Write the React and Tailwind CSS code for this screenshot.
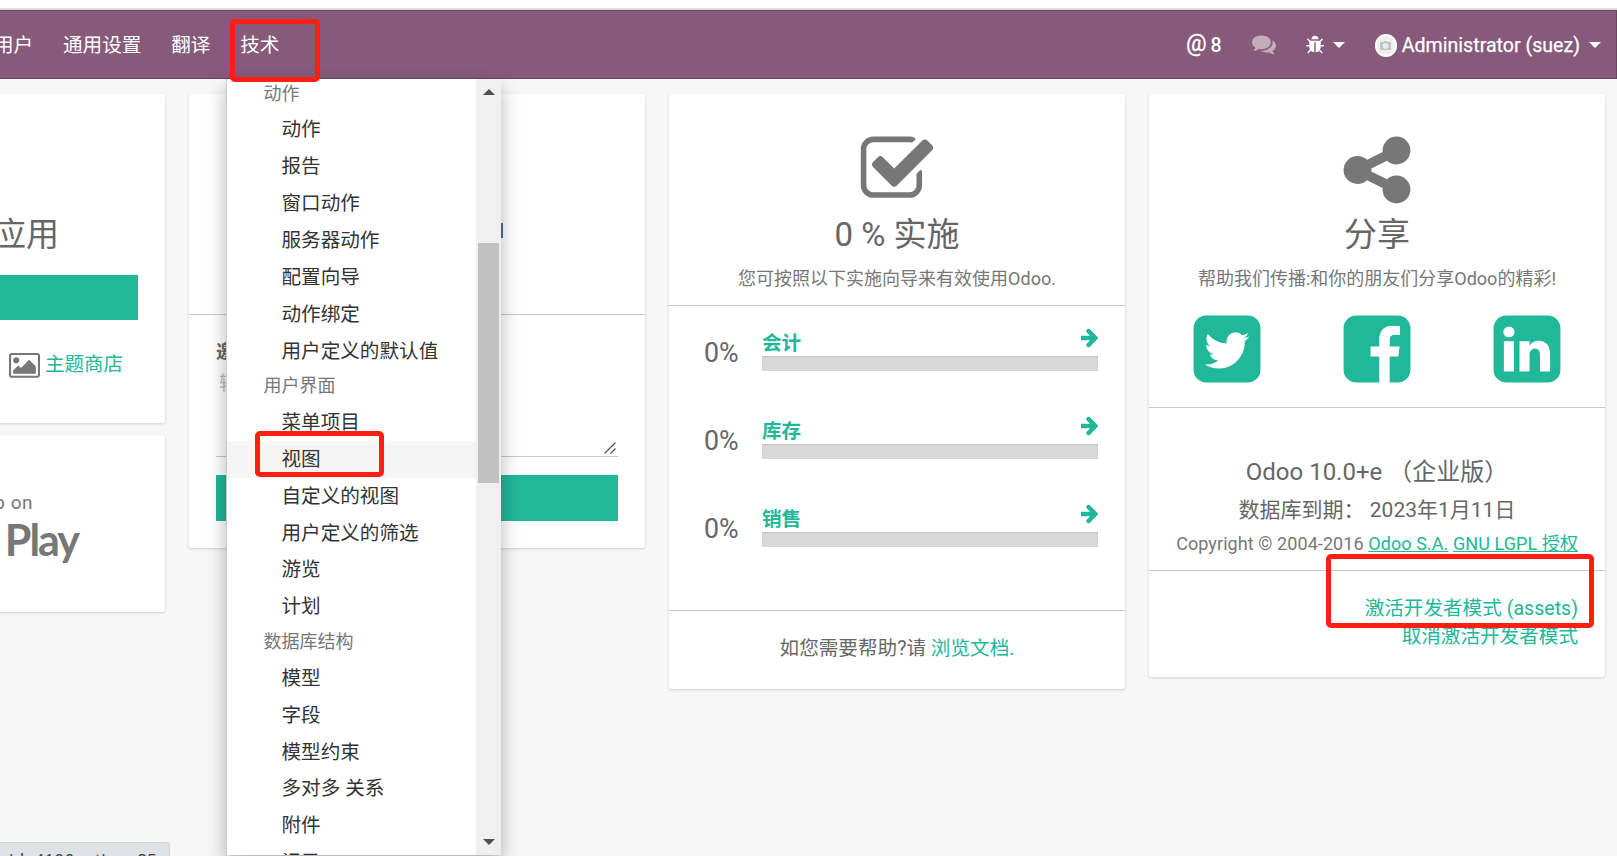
import clsx from 'clsx'

const MENU = [
  { header: true, label: '动作' },
  { label: '动作' },
  { label: '报告' },
  { label: '窗口动作' },
  { label: '服务器动作' },
  { label: '配置向导' },
  { label: '动作绑定' },
  { label: '用户定义的默认值' },
  { header: true, label: '用户界面' },
  { label: '菜单项目' },
  { label: '视图', active: true },
  { label: '自定义的视图' },
  { label: '用户定义的筛选' },
  { label: '游览' },
  { label: '计划' },
  { header: true, label: '数据库结构' },
  { label: '模型' },
  { label: '字段' },
  { label: '模型约束' },
  { label: '多对多 关系' },
  { label: '附件' },
  { label: '记录' },
]

const PLANNERS = ['会计', '库存', '销售']

const ICONS = {
  check: 'M1472 930v318q0 119-84.5 203.5t-203.5 84.5h-832q-119 0-203.5-84.5t-84.5-203.5v-832q0-119 84.5-203.5t203.5-84.5h832q63 0 117 25 15 7 18 23 3 17-9 29l-49 49q-10 10-23 10-3 0-9-2-23-6-45-6h-832q-66 0-113 47t-47 113v832q0 66 47 113t113 47h832q66 0 113-47t47-113v-254q0-13 9-22l64-64q10-10 23-10 6 0 12 3 20 8 20 29zm231-489l-814 814q-24 24-57 24t-57-24l-430-430q-24-24-24-57t24-57l110-110q24-24 57-24t57 24l263 263 647-647q24-24 57-24t57 24l110 110q24 24 24 57t-24 57z',
  share: 'M1344 1024q133 0 226.5 93.5t93.5 226.5-93.5 226.5-226.5 93.5-226.5-93.5-93.5-226.5q0-12 2-34l-360-180q-92 86-218 86-133 0-226.5-93.5t-93.5-226.5 93.5-226.5 226.5-93.5q126 0 218 86l360-180q-2-22-2-34 0-133 93.5-226.5t226.5-93.5 226.5 93.5 93.5 226.5-93.5 226.5-226.5 93.5q-126 0-218-86l-360 180q2 22 2 34t-2 34l360 180q92-86 218-86z',
  arrow: 'M1472 960q0 54-37 91l-651 651q-39 37-91 37-51 0-90-37l-75-75q-38-38-38-91t38-91l293-293h-704q-52 0-84.5-37.5t-32.5-90.5v-128q0-53 32.5-90.5t84.5-37.5h704l-293-294q-38-36-38-90t38-90l75-75q38-38 90-38 53 0 91 38l651 651q37 35 37 90z',
  twitter: 'M1408 610q-56 25-121 34 68-40 93-117-65 38-134 51-61-66-153-66-87 0-148.5 61.5t-61.5 148.5q0 29 5 48-129-7-242-65t-192-155q-29 50-29 106 0 114 91 175-47-1-100-26v2q0 75 50 133.500t123 72.500q-29 8-51 8-13 0-39-4 21 63 74.500 104t121.500 42q-116 90-261 90-26 0-50-3 148 94 322 94 112 0 210-35.500t168-95 120.500-137 75-162 24.500-168.500q0-18-1-27 63-45 105-109zm256-194v960q0 119-84.500 203.500t-203.500 84.500h-960q-119 0-203.500-84.500t-84.500-203.500v-960q0-119 84.500-203.500t203.500-84.500h960q119 0 203.500 84.500t84.500 203.500z',
  facebook: 'M1376 128q119 0 203.500 84.500t84.500 203.500v960q0 119-84.500 203.500t-203.500 84.500h-188v-595h199l30-232h-229v-148q0-56 23.500-84t91.500-28l122-1v-207q-63-9-178-9-136 0-217.500 80t-81.500 226v171h-200v232h200v595h-532q-119 0-203.500-84.500t-84.500-203.500v-960q0-119 84.500-203.500t203.500-84.500h960z',
  linkedin: 'M365 1414h231v-694h-231v694zm246-908q-1-52-36-86t-93-34-94.500 34-36.500 86q0 51 35.500 85.500t92.500 34.500h1q59 0 95-34.500t36-85.500zm585 908h231v-398q0-154-73-233t-193-79q-136 0-209 117h2v-101h-231q3 66 0 694h231v-388q0-38 7-56 15-35 45-59.500t74-24.500q116 0 116 157v371zm468-998v960q0 119-84.500 203.500t-203.500 84.500h-960q-119 0-203.500-84.500t-84.500-203.500v-960q0-119 84.500-203.500t203.500-84.500h960q119 0 203.500 84.500t84.500 203.500z',
  picture: 'M576 576q0 80-56 136t-136 56-136-56-56-136 56-136 136-56 136 56 56 136zm1024 384v448h-1408v-192l320-320 160 160 512-512zm96-704h-1600q-13 0-22.500 9.500t-9.500 22.500v1216q0 13 9.500 22.500t22.500 9.500h1600q13 0 22.500-9.500t9.500-22.500v-1216q0-13-9.500-22.500t-22.500-9.500zm160 32v1216q0 66-47 113t-113 47h-1600q-66 0-113-47t-47-113v-1216q0-66 47-113t113-47h1600q66 0 113 47t47 113z',
  comments: 'M1408 768q0 139-94 257t-256.500 186.500-353.500 68.500q-86 0-176-16-124 88-278 128-36 9-86 16h-3q-11 0-20.500-8t-11.500-21q-1-3-1-6.500t.5-6.500 2-6l2.500-5 3.500-5.500 4-5 4.500-5 4-4.500q5-6 23-25t26-29.500 22.500-29 25-38.500 20.500-44q-124-72-195-177t-71-224q0-139 94-257t256.500-186.500 353.500-68.500 353.500 68.500 256.500 186.500 94 257zm384 256q0 120-71 224.500t-195 176.500q10 24 20.500 44t25 38.500 22.500 29 26 29.500 23 25q1 1 4 4.500t4.500 5 4 5 3.500 5.500l2.500 5 2 6 .5 6.500-1 6.500q-3 14-13 22t-22 7q-50-7-86-16-154-40-278-128-90 16-176 16-271 0-472-132 58 4 88 4 161 0 309-45t264-129q125-92 192-212t67-254q0-77-23-152 129 71 204 178t75 230z',
  bug: 'M1696 960q0 26-19 45t-45 19h-224q0 171-67 290l208 209q19 19 19 45t-19 45q-18 19-45 19t-45-19l-198-197q-5 5-15 13t-42 28.500-65 36.500-82 29-97 13v-896h-128v896q-51 0-101.500-13.500t-87-33-66-39-43.500-32.500l-15-14-183 207q-20 21-48 21-24 0-43-16-19-18-20.500-44.500t15.500-46.500l202-227q-58-114-58-274h-224q-26 0-45-19t-19-45 19-45 45-19h224v-294l-173-173q-19-19-19-45t19-45 45-19 45 19l173 173h844l173-173q19-19 45-19t45 19 19 45-19 45l-173 173v294h224q26 0 45 19t19 45zm-480-576h-640q0-133 93.500-226.500t226.500-93.500 226.500 93.500 93.500 226.500z',
}

function Icon({ name, viewBox = '0 0 1792 1792', className }) {
  return (
    <svg viewBox={viewBox} className={clsx('shrink-0 fill-current', className)} aria-hidden="true">
      <path d={ICONS[name]} />
    </svg>
  )
}

function Caret({ className }) {
  return <i className={clsx('border-x-[6px] border-t-[6px] border-x-transparent border-t-current', className)} />
}

function Card({ className, children }) {
  return (
    <section className={clsx('overflow-hidden rounded-[3px] bg-white shadow-[0_1px_3px_rgba(0,0,0,.16)]', className)}>
      {children}
    </section>
  )
}

function Navbar() {
  return (
    <header className="flex h-[69px] shrink-0 items-center border border-l-0 border-[#68465f] bg-[#875a7b] pt-0.5 text-[19.600px] text-white">
      <nav className="-ml-[6px] flex gap-[29.800px] whitespace-nowrap">
        <a>用户</a>
        <a>通用设置</a>
        <a>翻译</a>
        <a>技术</a>
      </nav>
      <div className="ml-auto flex items-center pr-[15px]">
        <span className="-mt-[3px] text-[23px] leading-none [-webkit-text-stroke:.3px_white]">@</span>
        <span className="ml-[4px] font-medium">8</span>
        <Icon name="comments" className="-mt-0.5 ml-[30px] size-6 opacity-50" />
        <Icon name="bug" className="-mt-px ml-[29px] size-5" />
        <Caret className="ml-2" />
        <span className="ml-[30px] flex h-[23px] w-[22px] items-center justify-center rounded-full border-2 border-white bg-[#eee]">
          <svg viewBox="0 0 12 10" className="w-[11px] fill-[#c4c4c4]">
            <path fillRule="evenodd" d="M1 1h3l1-1h2l1 1h3q1 0 1 1v7q0 1-1 1H1q-1 0-1-1V2q0-1 1-1zm5 1.500a3 3 0 1 0 0 6 3 3 0 0 0 0-6z" />
          </svg>
        </span>
        <span className="ml-[5px] [-webkit-text-stroke:.25px_white]">Administrator (suez)</span>
        <Caret className="ml-[9px]" />
      </div>
    </header>
  )
}

function AppsColumn() {
  return (
    <div className="flex w-[456px] shrink-0 flex-col gap-3">
      <Card className="flex h-[329px] flex-col items-end">
        <h2 className="mr-[106px] mt-[118px] text-[33px] leading-[46px] text-[#666]">浏览应用</h2>
        <div className="mr-[27px] mt-[17px] h-[45px] w-[402px] bg-[#21b799]" />
        <div className="mr-[42px] mt-[30px] flex items-center gap-[5px] text-[19.500px] text-[#21b799]">
          <Icon name="picture" viewBox="-64 128 1920 1536" className="mt-0.5 w-[31px] text-[#777]" />
          主题商店
        </div>
      </Card>
      <Card className="flex h-[177px] flex-col items-end text-[#777]">
        <p className="mr-[132px] mt-[56px] text-[19px] leading-6 tracking-[.5px]">Android App on</p>
        <p className="mr-[87px] font-['Lato'] text-[43px] font-bold leading-[50px] tracking-[-2px]">Google Play</p>
      </Card>
    </div>
  )
}

function InviteColumn() {
  return (
    <Card className="h-[454px] w-[456px] shrink-0">
      <div className="flex h-[221px] justify-end border-b border-[#c8c8c8] pr-[142px] pt-[129px]">
        <span className="h-[15px] w-0.5 bg-[#4a6f9c]" />
      </div>
      <div className="mx-[27px] pt-[24px]">
        <p className="text-[19.500px] font-bold leading-[28px] text-[#666]">邀请新用户</p>
        <div className="flex h-[90px] items-end justify-between border-b border-[#c8c8c8] text-[19.500px] text-[#bbb]">
          <span className="self-start pl-[3px] pt-0.5">输入电子邮件</span>
          <svg viewBox="0 0 12 12" className="mb-0.5 mr-0.5 size-3 stroke-[#555]" strokeWidth="1.200">
            <path d="M0.500 11.500 11.500 0.500M6.500 11.500l5-5" />
          </svg>
        </div>
        <div className="mt-[18px] h-[46px] bg-[#21b799]" />
      </div>
    </Card>
  )
}

function PlannerRow({ name }) {
  return (
    <div className="flex h-[88px] items-start">
      <span className="-ml-px w-[58px] pt-[9.500px] text-[26.800px] leading-[30px] text-[#666]">0%</span>
      <div className="flex-1">
        <div className="flex h-7 items-start justify-between font-bold text-[#21b799]">
          <span className="pt-[2px] text-[19.600px] leading-7">{name}</span>
          <Icon name="arrow" viewBox="64 128 1408 1664" className="h-5 w-[17px]" />
        </div>
        <div className="h-[15px] bg-[#d8d8d8] shadow-[inset_0_1px_2px_rgba(0,0,0,.1)]" />
      </div>
    </div>
  )
}

function PlannerColumn() {
  return (
    <Card className="h-[595px] w-[456px] shrink-0 text-center">
      <div className="flex h-[212px] flex-col items-center border-b border-[#c8c8c8] pt-[37px]">
        <Icon name="check" className="size-[78px] text-[#777]" />
        <h2 className="mt-[3px] text-[33px] leading-[46px] text-[#666]">0 % 实施</h2>
        <p className="mt-[7px] text-[18px] leading-[27px] text-[#777]">您可按照以下实施向导来有效使用Odoo.</p>
      </div>
      <div className="h-[305px] border-b border-[#c8c8c8] pl-[36px] pr-[27px] pt-[22px] text-left">
        {PLANNERS.map((name) => (
          <PlannerRow key={name} name={name} />
        ))}
      </div>
      <p className="pt-[23px] text-[19.600px] leading-[30px] text-[#666]">
        如您需要帮助?请 <a className="text-[#21b799]">浏览文档.</a>
      </p>
    </Card>
  )
}

function ShareColumn() {
  return (
    <Card className="h-[583px] w-[456px] shrink-0 text-center">
      <div className="flex h-[314px] flex-col items-center border-b border-[#c8c8c8] pt-[37px]">
        <Icon name="share" className="size-[78px] text-[#777]" />
        <h2 className="mt-[3px] text-[33px] leading-[46px] text-[#666]">分享</h2>
        <p className="mt-[7px] text-[18px] leading-[27px] text-[#777]">帮助我们传播:和你的朋友们分享Odoo的精彩!</p>
        <div className="mt-[18px] flex gap-[72px] text-[#21b799]">
          <Icon name="twitter" className="size-[78px]" />
          <Icon name="facebook" className="size-[78px]" />
          <Icon name="linkedin" className="size-[78px]" />
        </div>
      </div>
      <div className="h-[163px] border-b border-[#c8c8c8] pt-[46px] text-[#666]">
        <p className="text-[24px] leading-9">Odoo 10.0+e （企业版）</p>
        <p className="mt-[4px] text-[21px] leading-8">数据库到期： 2023年1月11日</p>
        <p className="mt-[4px] whitespace-nowrap pr-[27px] text-right text-[18px] leading-[27px] tracking-[.08px] text-[#777]">
          Copyright © 2004-2016 <a className="text-[#21b799] underline">Odoo S.A.</a>{' '}
          <a className="text-[#21b799] underline">GNU LGPL 授权</a>
        </p>
      </div>
      <div className="flex flex-col items-end pr-[27px] pt-[24px] text-[19.600px] leading-[28px] text-[#21b799]">
        <a>激活开发者模式 (assets)</a>
        <a>取消激活开发者模式</a>
      </div>
    </Card>
  )
}

function TechMenu() {
  return (
    <div className="absolute left-[226px] top-[79px] flex h-[776px] w-[275px] overflow-hidden border-l border-[#ccc] bg-white shadow-[0_9px_18px_rgba(0,0,0,.3)]">
      <ul className="-mt-[2.300px] flex-1 whitespace-nowrap">
        {MENU.map(({ label, header, active }, i) => (
          <li
            key={i}
            className={clsx(
              header
                ? 'pb-[4.800px] pl-[36.500px] pt-[4.200px] text-[18px] leading-[25.700px] text-[#777]'
                : 'pb-[3.900px] pl-[54.500px] pt-[5.100px] text-[19.600px] leading-[27.860px] text-[#333]',
              active && 'bg-[#f5f5f5]',
            )}
          >
            {label}
          </li>
        ))}
      </ul>
      {/* scrollbar */}
      <div className="flex w-[25px] flex-col items-center bg-[#f0f0f0] text-[#505050]">
        <i className="mt-[10px] border-x-[6px] border-b-[6px] border-x-transparent border-b-current" />
        <div className="mt-[148px] h-60 w-[21px] bg-[#c1c1c1]" />
        <Caret className="mb-[10px] mt-auto" />
      </div>
    </div>
  )
}

function Mark({ className }) {
  return <div className={clsx('absolute rounded-[5px] border-[5px] border-[#ff1f12]', className)} />
}

export default function App() {
  return (
    <div className="relative flex h-[856px] w-[1617px] flex-col overflow-hidden bg-[#f7f7f7] font-['Roboto','Noto_Sans_CJK_SC',sans-serif] font-normal">
      <div className="h-2 shrink-0 bg-white" />
      <div className="h-0.5 shrink-0 bg-[#d9dddd]" />
      <Navbar />
      <main className="-ml-[291px] mt-[15px] flex items-start gap-6">
        <AppsColumn />
        <InviteColumn />
        <PlannerColumn />
        <ShareColumn />
      </main>
      <TechMenu />
      {/* link preview of the browser */}
      <div className="absolute left-0 top-[842px] flex h-[28px] w-[170px] justify-end rounded-tr-[4px] border-r border-t border-[#d0d3d8] bg-[#dee1e6] pr-3 pt-[5px] font-['Open_Sans'] text-[17.500px] leading-[24px] text-[#3c4043]">
        <span className="whitespace-nowrap">menu_id=410&amp;action=85</span>
      </div>
      <Mark className="left-[230px] top-[19px] h-[63px] w-[90px]" />
      <Mark className="left-[255px] top-[431px] h-[46px] w-[129px]" />
      <Mark className="left-[1326px] top-[554px] h-[74px] w-[268px]" />
    </div>
  )
}
